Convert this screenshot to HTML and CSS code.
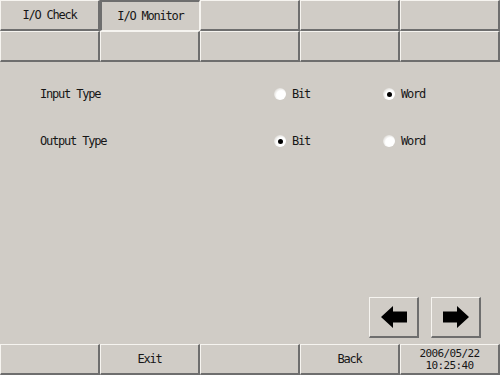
FILE: index.html
```html
<!DOCTYPE html>
<html>
<head>
<meta charset="utf-8">
<link rel="stylesheet" href="styles.css">
</head>
<body>
<div class="screen">
  <div class="tabs">
    <div class="cell">I/O Check</div>
    <div class="cell sel">I/O Monitor</div>
    <div class="cell"></div>
    <div class="cell"></div>
    <div class="cell"></div>
    <div class="cell"></div>
    <div class="cell"></div>
    <div class="cell"></div>
    <div class="cell"></div>
    <div class="cell"></div>
  </div>
  <div class="main">
    <div class="row">
      <span class="label">Input Type</span>
      <span class="opt"><span class="radio"></span>Bit</span>
      <span class="opt"><span class="radio on"></span>Word</span>
    </div>
    <div class="row">
      <span class="label">Output Type</span>
      <span class="opt"><span class="radio on"></span>Bit</span>
      <span class="opt"><span class="radio"></span>Word</span>
    </div>
  </div>
  <div class="nav">
    <div class="btn arrow">
      <svg width="26" height="22" viewBox="0 0 26 22"><path d="M0 11 L12 0 L12 5.5 L26 5.5 L26 16.5 L12 16.5 L12 22 Z" fill="#000"/></svg>
    </div>
    <div class="btn arrow">
      <svg width="26" height="22" viewBox="0 0 26 22"><path d="M26 11 L14 0 L14 5.5 L0 5.5 L0 16.5 L14 16.5 L14 22 Z" fill="#000"/></svg>
    </div>
  </div>
  <div class="bar">
    <div class="cell"></div>
    <div class="cell">Exit</div>
    <div class="cell"></div>
    <div class="cell">Back</div>
    <div class="cell date"><span class="dline">2006/05/22</span><span class="dline">10:25:40</span></div>
  </div>
</div>
</body>
</html>
```
FILE: styles.css
```css
html, body {
  margin: 0;
  padding: 0;
  background: #d0ccc6;
}
.screen {
  width: 500px;
  height: 375px;
  overflow: hidden;
  display: flex;
  flex-direction: column;
  font-family: "DejaVu Sans Mono", "Liberation Mono", monospace;
  font-size: 12px;
  letter-spacing: -1.2px;
  color: #161616;
}
.tabs {
  display: grid;
  grid-template-columns: repeat(5, 100px);
  grid-template-rows: 31px 31px;
}
.cell, .btn {
  box-sizing: border-box;
  border-style: solid;
  border-width: 1px 2px 2px 1px;
  border-color: #f6f4f0 #6e6e6e #6e6e6e #f6f4f0;
  display: flex;
  align-items: center;
  justify-content: center;
  background: #d0ccc6;
}
.cell.sel {
  border-width: 2px 1px 1px 2px;
  border-color: #6e6e6e #f6f4f0 #f6f4f0 #6e6e6e;
}
.main {
  flex: 1;
  display: flex;
  flex-direction: column;
  gap: 27px;
  padding: 22px 0 0 40px;
}
.row {
  display: grid;
  grid-template-columns: 234px 109px auto;
  height: 20px;
  align-items: center;
}
.opt {
  display: flex;
  align-items: center;
  gap: 6px;
}
.radio {
  box-sizing: border-box;
  width: 12px;
  height: 12px;
  border-radius: 50%;
  background: radial-gradient(circle at 60% 60%, #ffffff 45%, #e4e2de 70%, #b8b5b0 100%);
  display: flex;
  align-items: center;
  justify-content: center;
}
.radio.on::after {
  content: "";
  width: 5px;
  height: 5px;
  border-radius: 50%;
  background: #000;
}
.nav {
  display: flex;
  justify-content: flex-end;
  gap: 12px;
  padding-right: 19px;
  margin-bottom: 6px;
}
.btn.arrow {
  width: 50px;
  height: 41px;
}
.bar {
  display: grid;
  grid-template-columns: repeat(5, 100px);
  grid-template-rows: 31px;
}
.date {
  flex-direction: column;
  padding-top: 1px;
}
.dline {
  font-size: 11px;
  line-height: 12px;
  letter-spacing: -0.6px;
}
```
